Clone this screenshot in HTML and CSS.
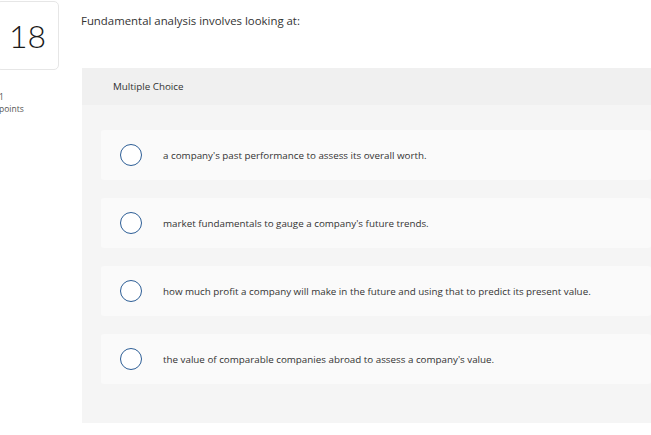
FILE: index.html
```html
<!DOCTYPE html>
<html>
<head>
<meta charset="utf-8">
<link rel="stylesheet" href="styles.css">
</head>
<body>
<div class="page">
  <div class="side">
    <div class="qnum">18</div>
    <div class="points">1<br>points</div>
  </div>
  <div class="main">
    <p class="question">Fundamental analysis involves looking at:</p>
    <div class="panel">
      <div class="panel-head">Multiple Choice</div>
      <div class="options">
        <div class="option"><span class="radio"></span><span class="label">a company's past performance to assess its overall worth.</span></div>
        <div class="option"><span class="radio"></span><span class="label">market fundamentals to gauge a company's future trends.</span></div>
        <div class="option"><span class="radio"></span><span class="label">how much profit a company will make in the future and using that to predict its present value.</span></div>
        <div class="option"><span class="radio"></span><span class="label">the value of comparable companies abroad to assess a company's value.</span></div>
      </div>
    </div>
  </div>
</div>
</body>
</html>
```
FILE: styles.css
```css
html, body {
  margin: 0;
  padding: 0;
  background: #ffffff;
  overflow: hidden;
}
body {
  font-family: "Open Sans", Lato, "Liberation Sans", sans-serif;
  color: #333333;
}
.page {
  display: grid;
  grid-template-columns: 82px 1fr;
  width: 100%;
}
.side {
  margin-left: -4px;
}
.qnum {
  width: 63px;
  height: 69px;
  box-sizing: border-box;
  border: 1px solid #e6e6e6;
  border-radius: 5px;
  display: flex;
  align-items: center;
  justify-content: center;
  font-family: Lato, "Open Sans", sans-serif;
  font-size: 32px;
  font-weight: 300;
  color: #1a1a1a;
  margin-top: 1px;
}
.points {
  margin-top: 21px;
  padding-left: 3px;
  font-size: 8.5px;
  line-height: 12px;
  color: #555555;
}
.main {
  display: flex;
  flex-direction: column;
}
.question {
  margin: 13px 0 0 -1px;
  font-size: 11.4px;
  line-height: 16px;
  color: #333333;
  height: 55px;
}
.panel {
  background: #f5f5f5;
  height: 355px;
}
.panel-head {
  background: #f0f0f0;
  height: 37px;
  display: flex;
  align-items: center;
  padding-left: 31px;
  font-size: 9.8px;
  color: #333333;
}
.options {
  display: flex;
  flex-direction: column;
  gap: 18px;
  padding: 25px 0 0 19px;
}
.option {
  background: #fafafa;
  height: 50px;
  border-radius: 3px;
  display: flex;
  align-items: center;
}
.radio {
  width: 22px;
  height: 22px;
  box-sizing: border-box;
  border: 1.5px solid #2d5e96;
  border-radius: 50%;
  background: #ffffff;
  margin-left: 19px;
  flex: none;
}
.label {
  margin-left: 21px;
  font-size: 9.8px;
  color: #333333;
}
```
